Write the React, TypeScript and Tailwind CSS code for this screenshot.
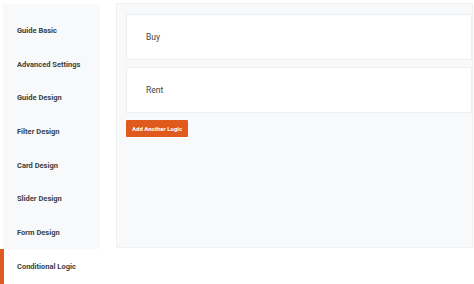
import React from 'react';

const tabs = [
  'Guide Basic',
  'Advanced Settings',
  'Guide Design',
  'Filter Design',
  'Card Design',
  'Slider Design',
  'Form Design',
];

const logics = ['Buy', 'Rent'];

export default function App() {
  return (
    <div className="w-[474px] h-[284px] bg-white flex overflow-hidden" style={{ fontFamily: 'Roboto, "Liberation Sans", sans-serif' }}>
      {/* Sidebar */}
      <div className="w-[100px] shrink-0 flex flex-col pt-[4px]">
        <div className="ml-[3px] bg-[#f8f9fa] pt-[10px]">
          {tabs.map((t) => (
            <div key={t} className="h-[33.6px] flex items-center pl-[14px] text-[7.5px] font-bold text-[#3a3f44]">
              {t}
            </div>
          ))}
        </div>
        <div className="h-[35px] flex items-center border-l-[4px] border-[#e05a20] pl-[13px] text-[7.5px] font-bold text-[#3a3f44] bg-white">
          Conditional Logic
        </div>
      </div>

      {/* Main panel */}
      <div className="ml-[16px] mt-[3px] w-[357px] h-[245px] bg-[#f8f9fa] border border-[#eef0f2] pl-[9px] pt-[10px] flex flex-col">
        {logics.map((l) => (
          <div key={l} className="h-[46px] mb-[7px] bg-white border border-[#eceef0] flex items-center pl-[19px] text-[8.5px] text-[#444]">
            {l}
          </div>
        ))}
        <div className="flex">
          <button className="h-[17px] px-[6px] bg-[#e05a1e] text-white text-[6px] font-bold rounded-[1px] leading-none">
            Add Another Logic
          </button>
        </div>
      </div>
    </div>
  );
}
